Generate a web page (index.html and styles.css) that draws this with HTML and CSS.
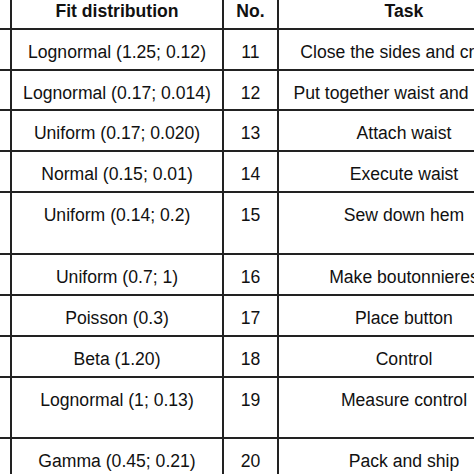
FILE: index.html
```html
<!DOCTYPE html>
<html lang="en">
<head>
<meta charset="utf-8">
<title>Task distributions</title>
<link rel="stylesheet" href="styles.css">
</head>
<body>
<div class="crop">
  <table class="dist">
    <colgroup>
      <col class="c-op">
      <col class="c-fit">
      <col class="c-no">
      <col class="c-task">
    </colgroup>
    <thead>
      <tr><th></th><th>Fit distribution</th><th>No.</th><th>Task</th></tr>
    </thead>
    <tbody>
      <tr><td></td><td>Lognormal (1.25; 0.12)</td><td>11</td><td>Close the sides and crotch</td></tr>
      <tr class="short"><td></td><td>Lognormal (0.17; 0.014)</td><td>12</td><td>Put together waist and lining</td></tr>
      <tr><td></td><td>Uniform (0.17; 0.020)</td><td>13</td><td>Attach waist</td></tr>
      <tr><td></td><td>Normal (0.15; 0.01)</td><td>14</td><td>Execute waist</td></tr>
      <tr class="tall"><td></td><td>Uniform (0.14; 0.2)</td><td>15</td><td>Sew down hem</td></tr>
      <tr><td></td><td>Uniform (0.7; 1)</td><td>16</td><td>Make boutonnieres</td></tr>
      <tr><td></td><td>Poisson (0.3)</td><td>17</td><td>Place button</td></tr>
      <tr><td></td><td>Beta (1.20)</td><td>18</td><td>Control</td></tr>
      <tr class="tall short"><td></td><td>Lognormal (1; 0.13)</td><td>19</td><td>Measure control</td></tr>
      <tr><td></td><td>Gamma (0.45; 0.21)</td><td>20</td><td>Pack and ship</td></tr>
    </tbody>
  </table>
</div>
</body>
</html>
```
FILE: styles.css
```css
html, body {
  margin: 0;
  padding: 0;
  background: #ffffff;
}

.crop {
  width: 474px;
  height: 474px;
  overflow: hidden;
}

.dist {
  border-collapse: collapse;
  table-layout: fixed;
  width: 619px;
  margin-left: -90px;
  margin-top: -13px;
  font-family: "Liberation Sans", Arial, sans-serif;
  font-size: 17.6px;
  line-height: 20px;
  color: #111111;
}

.c-op { width: 100px; }
.c-fit { width: 212px; }
.c-no { width: 55px; }
.c-task { width: 252px; }

.dist th,
.dist td {
  border: 2px solid #222222;
  padding: 12px 0 7px;
  text-align: center;
  vertical-align: top;
  white-space: nowrap;
  overflow: hidden;
}

.dist th {
  font-weight: bold;
}

.dist tr.short td {
  padding-bottom: 6px;
}

.dist tr.tall td {
  padding-bottom: 28px;
}

.dist tr.tall.short td {
  padding-bottom: 27px;
}
```
